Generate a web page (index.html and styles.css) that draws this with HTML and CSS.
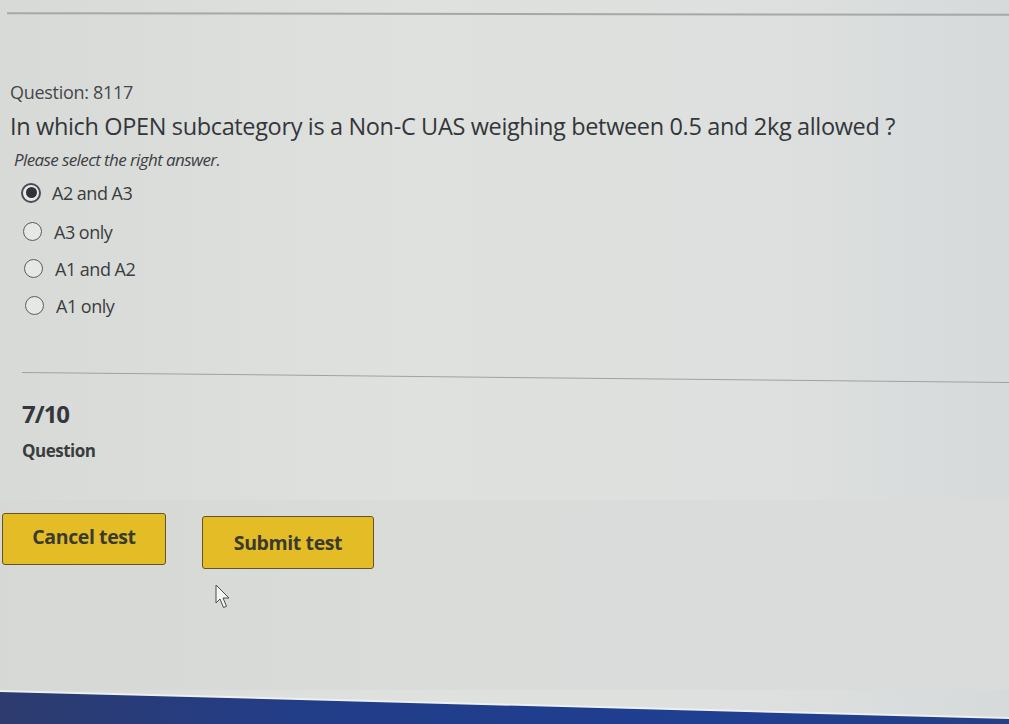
FILE: index.html
```html
<!DOCTYPE html>
<html>
<head>
<meta charset="utf-8">
<link rel="stylesheet" href="styles.css">
</head>
<body>
<div class="page">
  <div class="top-rule"></div>
  <section class="question">
    <div class="q-id">Question: 8117</div>
    <h1 class="q-text">In which OPEN subcategory is a Non-C UAS weighing between 0.5 and 2kg allowed ?</h1>
    <p class="q-hint">Please select the right answer.</p>
    <ul class="answers">
      <li class="answer"><span class="radio checked"></span><span>A2 and A3</span></li>
      <li class="answer"><span class="radio"></span><span>A3 only</span></li>
      <li class="answer"><span class="radio"></span><span>A1 and A2</span></li>
      <li class="answer"><span class="radio"></span><span>A1 only</span></li>
    </ul>
  </section>
  <div class="mid-rule"></div>
  <section class="progress">
    <div class="count">7/10</div>
    <div class="count-label">Question</div>
  </section>
  <section class="actions">
    <button class="btn btn-cancel">Cancel test</button>
    <button class="btn btn-submit">Submit test</button>
    <svg class="cursor" width="16" height="26" viewBox="0 0 16 26"><path d="M1 1 L1 19 L5 15 L8.5 23.5 L11.5 22.3 L8 14 L14 14 Z" fill="#f4f5f3" stroke="#4a4a4a" stroke-width="1" stroke-linejoin="round"/></svg>
  </section>
  <div class="taskbar"><div class="taskbar-fill"></div></div>
</div>
</body>
</html>
```

FILE: styles.css
```css
html, body {
  margin: 0;
  padding: 0;
}
body {
  width: 1009px;
  height: 724px;
  overflow: hidden;
  background: #dcdedb;
  font-family: "Open Sans", "DejaVu Sans", sans-serif;
  color: #3b3e42;
}
.page {
  position: relative;
  height: 724px;
  display: flex;
  flex-direction: column;
  background: linear-gradient(90deg, #d8dad7 0%, #dfe1de 40%, #dde0de 75%, #d6dadb 100%);
}
.top-rule {
  margin: 13px 0 0 7px;
  height: 2px;
  background: #a6a8a7;
  transform: rotate(0.1deg);
}
.question {
  padding: 65px 0 0 10px;
}
.q-id {
  font-size: 18px;
  line-height: 24px;
  color: #45484b;
  letter-spacing: -0.3px;
}
.q-text {
  margin: 6px 0 0 0;
  font-size: 23.5px;
  font-weight: 400;
  line-height: 32px;
  letter-spacing: -0.35px;
  color: #33363a;
}
.q-hint {
  margin: 6px 0 0 4px;
  font-size: 17px;
  font-style: italic;
  line-height: 24px;
  letter-spacing: -0.6px;
  color: #3d4044;
}
.answers {
  list-style: none;
  margin: 9px 0 0 0;
  padding: 0 0 0 11px;
  display: flex;
  flex-direction: column;
  gap: 14px;
}
.answer {
  display: flex;
  align-items: center;
  gap: 11px;
  height: 23px;
  font-size: 18px;
  letter-spacing: -0.5px;
  color: #3a3d40;
}
.answer:nth-child(2) { padding-left: 2px; gap: 12px; margin-top: 2px; }
.answer:nth-child(3) { padding-left: 3px; gap: 12px; }
.answer:nth-child(4) { padding-left: 4px; gap: 12px; }
.radio {
  width: 19px;
  height: 19px;
  border: 1.5px solid #5a5d60;
  border-radius: 50%;
  background: #e6e8e6;
  box-sizing: border-box;
  flex: none;
  position: relative;
}
.radio.checked {
  width: 20px;
  height: 20px;
  border: 2px solid #4a4d50;
  background: #e8eae8;
}
.radio.checked::after {
  content: "";
  position: absolute;
  left: 2.5px;
  top: 2.5px;
  width: 11px;
  height: 11px;
  border-radius: 50%;
  background: #2f3236;
}
.mid-rule {
  margin: 55px 0 0 22px;
  height: 1px;
  background: #9fa2a2;
  transform-origin: 0 0;
  transform: rotate(0.58deg);
}
.progress {
  padding: 27px 0 0 22px;
}
.count {
  font-size: 24px;
  font-weight: 700;
  line-height: 28px;
  letter-spacing: -1px;
  color: #33363a;
}
.count-label {
  margin-top: 12px;
  font-size: 17px;
  font-weight: 700;
  line-height: 22px;
  letter-spacing: -0.5px;
  color: #3a3d40;
}
.actions {
  position: relative;
  margin-top: 38px;
  padding: 13px 0 0 2px;
  flex: 1;
  display: flex;
  align-items: flex-start;
  gap: 36px;
  background: linear-gradient(90deg, #d5d8d5 0%, #dadcda 40%, #d9dcdb 100%);
}
.btn {
  font-family: "Open Sans", "DejaVu Sans", sans-serif;
  font-size: 19.5px;
  font-weight: 700;
  letter-spacing: -0.4px;
  color: #3a3a32;
  background: #e4bc26;
  border: 1.5px solid #62552a;
  border-radius: 3px;
  height: 52px;
  cursor: pointer;
}
.btn-cancel {
  width: 164px;
  padding-bottom: 6px;
}
.btn-submit {
  width: 172px;
  height: 53px;
  margin-top: 3px;
  padding-bottom: 2px;
}
.cursor {
  position: absolute;
  left: 215px;
  top: 84px;
}
.taskbar {
  height: 34px;
  flex: none;
  position: relative;
  clip-path: polygon(0 0, 100% 27px, 100% 100%, 0 100%);
  background: #eef0f0;
}
.taskbar-fill {
  position: absolute;
  inset: 2px 0 0 0;
  clip-path: polygon(0 0, 100% 27px, 100% 100%, 0 100%);
  background: linear-gradient(90deg, #2d3b6e 0%, #223d88 30%, #1f3f92 70%, #263f86 100%);
}
```
